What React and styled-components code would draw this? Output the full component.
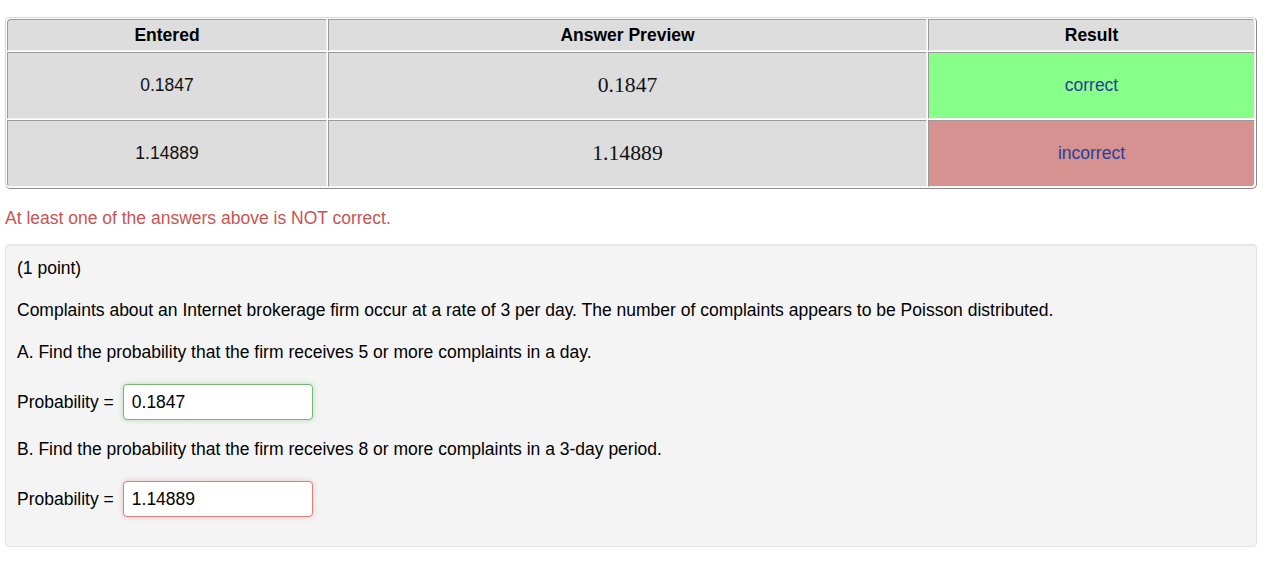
import styled, { createGlobalStyle } from 'styled-components'

const GlobalStyle = createGlobalStyle`
  body {
    margin: 0;
    background: #fff;
    font-family: "Liberation Sans", Arial, sans-serif;
    color: #000;
  }
`

const Page = styled.div`
  width: 1252px;
  padding: 17px 31px 20px 5px;
`

const Results = styled.table`
  width: 100%;
  table-layout: fixed;
  border-collapse: separate;
  border-spacing: 1px;
  border: 1px solid;
  border-color: #d6d6d6 #8a8a8a #8a8a8a #d6d6d6;
  border-radius: 5px;
  font-size: 17.5px;
`

const Head = styled.th`
  background: #ddd;
  height: 30px;
  font-weight: bold;
  text-align: center;
  border: 1px solid;
  border-color: #9a9a9a #f4f4f4 #f4f4f4 #9a9a9a;
  padding: 0;
  ${p => p.$first && 'border-top-left-radius: 4px;'}
  ${p => p.$last && 'border-top-right-radius: 4px;'}
`

const Cell = styled.td`
  height: 65px;
  padding: 0;
  text-align: center;
  border: 1px solid;
  border-color: #9a9a9a #f4f4f4 #f4f4f4 #9a9a9a;
  background: ${p => p.$status === 'correct' ? '#88ff88' : p.$status === 'incorrect' ? '#d69191' : '#ddd'};
  color: ${p => p.$status ? '#27409a' : '#111'};
  ${p => p.$corner && 'border-bottom-right-radius: 4px;'}
  ${p => p.$cornerLeft && 'border-bottom-left-radius: 4px;'}
`

const MathText = styled.span`
  font-family: "Liberation Serif", "Times New Roman", serif;
  font-size: 21.7px;
`

const Message = styled.div`
  color: #c75453;
  font-size: 17.5px;
  line-height: 21px;
  margin: 19px 0 15px;
`

const Well = styled.div`
  background: #f4f4f4;
  border: 1px solid #e3e3e3;
  border-radius: 4px;
  box-shadow: inset 0 1px 1px rgba(0, 0, 0, 0.05);
  padding: 13px 11px 10px;
  font-size: 17.5px;
  line-height: 21px;
`

const Para = styled.p`
  margin: 0 0 21px;
`

const AnswerRow = styled.div`
  display: flex;
  align-items: center;
  gap: 9px;
  margin: 0 0 19px;
`

const Input = styled.input`
  width: 190px;
  height: 36px;
  box-sizing: border-box;
  padding: 0 8px;
  font: 17.5px "Liberation Sans", Arial, sans-serif;
  color: #000;
  background: #fff;
  border: 1px solid ${p => p.$ok ? '#72b872' : '#d98080'};
  border-radius: 4px;
  box-shadow: 0 0 5px ${p => p.$ok ? 'rgba(92,184,92,0.45)' : 'rgba(217,83,79,0.35)'};
  outline: none;
`

const rows = [
  { entered: '0.1847', status: 'correct' },
  { entered: '1.14889', status: 'incorrect' },
]

export default function App() {
  return (
    <Page>
      <GlobalStyle />
      <Results>
        <colgroup>
          <col style={{ width: 320 }} />
          <col style={{ width: 599 }} />
          <col />
        </colgroup>
        <thead>
          <tr>
            <Head $first>Entered</Head>
            <Head>Answer Preview</Head>
            <Head $last>Result</Head>
          </tr>
        </thead>
        <tbody>
          {rows.map((r, i) => (
            <tr key={r.entered}>
              <Cell $cornerLeft={i === rows.length - 1}>{r.entered}</Cell>
              <Cell><MathText>{r.entered}</MathText></Cell>
              <Cell $status={r.status} $corner={i === rows.length - 1}>{r.status}</Cell>
            </tr>
          ))}
        </tbody>
      </Results>
      <Message>At least one of the answers above is NOT correct.</Message>
      <Well>
        <Para>(1 point)</Para>
        <Para>
          Complaints about an Internet brokerage firm occur at a rate of 3 per day. The number of complaints appears to be Poisson distributed.
        </Para>
        <Para>A. Find the probability that the firm receives 5 or more complaints in a day.</Para>
        <AnswerRow>
          <span>Probability =</span>
          <Input $ok defaultValue="0.1847" />
        </AnswerRow>
        <Para>B. Find the probability that the firm receives 8 or more complaints in a 3-day period.</Para>
        <AnswerRow>
          <span>Probability =</span>
          <Input defaultValue="1.14889" />
        </AnswerRow>
      </Well>
    </Page>
  )
}
